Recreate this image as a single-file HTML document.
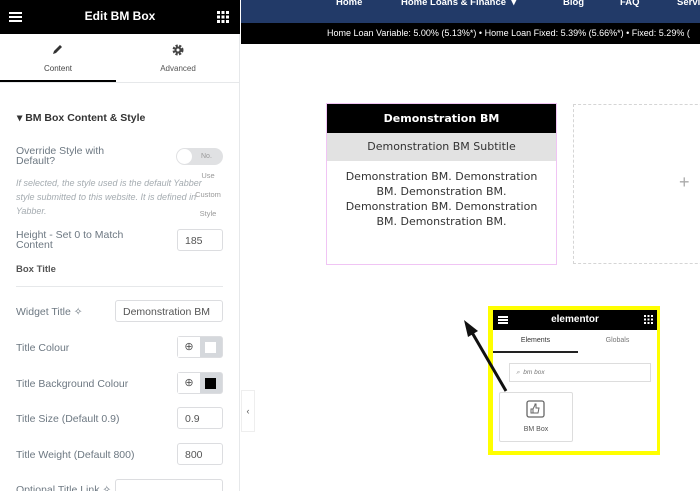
<!DOCTYPE html>
<html><head><style>
*{box-sizing:border-box;margin:0;padding:0}
html,body{width:700px;height:491px;overflow:hidden}
body{background:#fff;font-family:"Liberation Sans",sans-serif;position:relative}
.a{position:absolute}
.lbl{font-size:10.5px;color:#6d7882}
.inp{border:1px solid #dcdde0;border-radius:3px;background:#fff;font-size:10.5px;color:#555;padding:5px 7px}
</style></head><body>
<div class="a" style="left:0;top:0;width:240px;height:491px;background:#fff;border-right:1px solid #e6e8ea"></div>
<div class="a" style="left:0;top:0;width:240px;height:34px;background:#000;color:#fff;font-weight:bold;font-size:12px;text-align:center;line-height:33px">Edit BM Box</div>
<div class="a" style="left:9px;top:12px;width:13px;height:2px;background:#fff;box-shadow:0 4px 0 #fff,0 8px 0 #fff"></div>
<svg class="a" style="left:217px;top:11px" width="12" height="12"><g fill="#fff"><rect x="0" y="0" width="3" height="3"/><rect x="4.5" y="0" width="3" height="3"/><rect x="9" y="0" width="3" height="3"/><rect x="0" y="4.5" width="3" height="3"/><rect x="4.5" y="4.5" width="3" height="3"/><rect x="9" y="4.5" width="3" height="3"/><rect x="0" y="9" width="3" height="3"/><rect x="4.5" y="9" width="3" height="3"/><rect x="9" y="9" width="3" height="3"/></g></svg>
<div class="a" style="left:0;top:82px;width:240px;height:1px;background:#e6e8ea"></div>
<div class="a" style="left:0;top:80px;width:116px;height:2px;background:#000"></div>
<svg class="a" style="left:51px;top:44px" width="12" height="12"><path d="M2 10 L3 7 L9 1 L11 3 L5 9 Z" fill="#333"/></svg>
<div class="a" style="left:0;top:64px;width:116px;text-align:center;font-size:8px;color:#444">Content</div>
<svg class="a" style="left:172px;top:44px" width="12" height="12"><circle cx="6" cy="6" r="4" fill="none" stroke="#444" stroke-width="3" stroke-dasharray="2 1.3"/><circle cx="6" cy="6" r="3.5" fill="#444"/><circle cx="6" cy="6" r="1.5" fill="#fff"/></svg>
<div class="a" style="left:120px;top:64px;width:116px;text-align:center;font-size:8px;color:#555">Advanced</div>
<div class="a" style="left:17px;top:112px;font-size:10.5px;font-weight:bold;color:#333">▾ BM Box Content &amp; Style</div>
<div class="a lbl" style="left:16px;top:146px;line-height:10px">Override Style with<br>Default?</div>
<div class="a" style="left:176px;top:148px;width:47px;height:17px;border-radius:9px;background:#e0e1e3"></div>
<div class="a" style="left:177px;top:149px;width:15px;height:15px;border-radius:50%;background:#fff"></div>
<div class="a" style="left:201px;top:153px;font-size:7px;color:#999">No.</div>
<div class="a" style="left:193px;top:166px;font-size:7.5px;color:#999;text-align:center;line-height:19px;width:30px">Use<br>Custom<br>Style</div>
<div class="a" style="left:16px;top:176px;font-size:9px;font-style:italic;color:#a4abb0;line-height:14px;width:200px">If selected, the style used is the default Yabber style submitted to this website. It is defined in Yabber.</div>
<div class="a lbl" style="left:16px;top:230px;line-height:10px">Height - Set 0 to Match<br>Content</div>
<div class="a inp" style="left:177px;top:229px;width:46px;height:22px">185</div>
<div class="a" style="left:16px;top:264px;font-size:9.5px;font-weight:bold;color:#555">Box Title</div>
<div class="a" style="left:16px;top:286px;width:207px;height:1px;background:#e6e8ea"></div>
<div class="a lbl" style="left:16px;top:306px">Widget Title ✧</div>
<div class="a inp" style="left:115px;top:300px;width:108px;height:22px">Demonstration BM</div>
<div class="a lbl" style="left:16px;top:342px">Title Colour</div>
<div class="a" style="left:177px;top:336px;width:46px;height:22px;border:1px solid #dcdde0;border-radius:3px;background:#d5d8dc"><div style="position:absolute;left:0;top:0;width:22px;height:20px;background:#fff;font-size:11px;text-align:center;line-height:20px;color:#555">⊕</div><div style="position:absolute;left:27px;top:5px;width:11px;height:11px;background:#fff"></div></div>
<div class="a lbl" style="left:16px;top:378px">Title Background Colour</div>
<div class="a" style="left:177px;top:372px;width:46px;height:22px;border:1px solid #dcdde0;border-radius:3px;background:#d5d8dc"><div style="position:absolute;left:0;top:0;width:22px;height:20px;background:#fff;font-size:11px;text-align:center;line-height:20px;color:#555">⊕</div><div style="position:absolute;left:27px;top:5px;width:11px;height:11px;background:#000"></div></div>
<div class="a lbl" style="left:16px;top:413px">Title Size (Default 0.9)</div>
<div class="a inp" style="left:177px;top:407px;width:46px;height:22px">0.9</div>
<div class="a lbl" style="left:16px;top:449px">Title Weight (Default 800)</div>
<div class="a inp" style="left:177px;top:443px;width:46px;height:22px">800</div>
<div class="a lbl" style="left:16px;top:484px">Optional Title Link ✧</div>
<div class="a inp" style="left:115px;top:479px;width:108px;height:22px"></div>
<div class="a" style="left:241px;top:390px;width:14px;height:42px;background:#fff;border:1px solid #eee;font-size:9px;color:#555;text-align:center;line-height:40px">‹</div>
<div class="a" style="left:241px;top:0;width:459px;height:23px;background:#223a68;color:#fff;font-weight:bold;font-size:9.5px"><span class="a" style="left:95px;top:-3px">Home</span><span class="a" style="left:160px;top:-3px">Home Loans &amp; Finance &nbsp;▾</span><span class="a" style="left:322px;top:-3px">Blog</span><span class="a" style="left:379px;top:-3px">FAQ</span><span class="a" style="left:436px;top:-3px">Servi</span></div>
<div class="a" style="left:241px;top:23px;width:459px;height:21px;background:#000;color:#fff;font-size:9px;line-height:20px;white-space:nowrap;overflow:hidden;padding-left:86px">Home Loan Variable: 5.00% (5.13%*) • Home Loan Fixed: 5.39% (5.66%*) • Fixed: 5.29% (</div>
<div class="a" style="left:326px;top:103px;width:231px;height:162px;border:1.5px solid #f0c4f4;background:#fff"></div>
<div class="a" style="left:327px;top:104px;width:229px;height:29px;background:#000;color:#fff;font-weight:bold;font-size:11px;text-align:center;line-height:29px;font-family:'DejaVu Sans',sans-serif">Demonstration BM</div>
<div class="a" style="left:327px;top:133px;width:229px;height:28px;background:#e2e2e2;color:#333;font-size:11px;text-align:center;line-height:28px;font-family:'DejaVu Sans',sans-serif">Demonstration BM Subtitle</div>
<div class="a" style="left:336px;top:169px;width:211px;color:#333;font-size:11px;text-align:center;line-height:15px;font-family:'DejaVu Sans',sans-serif">Demonstration BM. Demonstration BM. Demonstration BM.<br>Demonstration BM. Demonstration BM. Demonstration BM.</div>
<div class="a" style="left:573px;top:104px;width:140px;height:160px;border:1px dashed #d5d5d5"></div>
<div class="a" style="left:679px;top:172px;font-size:18px;color:#aaa">+</div>
<div class="a" style="left:488px;top:306px;width:172px;height:149px;background:#ffff00"></div>
<div class="a" style="left:493px;top:310px;width:164px;height:141px;background:#fff"></div>
<div class="a" style="left:493px;top:310px;width:164px;height:20px;background:#000;color:#fff;font-weight:bold;font-size:10px;text-align:center;line-height:20px">elementor</div>
<div class="a" style="left:498px;top:316px;width:10px;height:2px;background:#fff;box-shadow:0 3px 0 #fff,0 6px 0 #fff"></div>
<svg class="a" style="left:644px;top:315px" width="9" height="9"><g fill="#fff"><rect x="0" y="0" width="2" height="2"/><rect x="3.5" y="0" width="2" height="2"/><rect x="7" y="0" width="2" height="2"/><rect x="0" y="3.5" width="2" height="2"/><rect x="3.5" y="3.5" width="2" height="2"/><rect x="7" y="3.5" width="2" height="2"/><rect x="0" y="7" width="2" height="2"/><rect x="3.5" y="7" width="2" height="2"/><rect x="7" y="7" width="2" height="2"/></g></svg>
<div class="a" style="left:493px;top:337px;width:85px;text-align:center;font-size:7px;color:#333">Elements</div>
<div class="a" style="left:578px;top:337px;width:79px;text-align:center;font-size:7px;color:#777">Globals</div>
<div class="a" style="left:493px;top:351px;width:85px;height:2px;background:#222"></div>
<div class="a" style="left:509px;top:363px;width:142px;height:19px;border:1px solid #ddd;font-size:6.5px;font-style:italic;color:#777;line-height:17px;padding-left:6px">⌕ &nbsp;bm box</div>
<div class="a" style="left:499px;top:392px;width:74px;height:50px;border:1px solid #ddd;border-radius:2px"></div>
<svg class="a" style="left:526px;top:400px" width="19" height="18"><rect x="1" y="1" width="17" height="16" rx="2" fill="none" stroke="#666" stroke-width="1.3"/><path d="M5 13 V9 H7 V13 Z M7 9 L9 5 V4 H10 L10 8 H13 L12 13 H7" fill="none" stroke="#666"/></svg>
<div class="a" style="left:499px;top:426px;width:74px;text-align:center;font-size:7px;color:#555">BM Box</div>
<svg class="a" style="left:460px;top:315px" width="50" height="80"><line x1="46" y1="76" x2="10" y2="14" stroke="#111" stroke-width="3"/><path d="M4 5 L18 16 L8 22 Z" fill="#111"/></svg>
</body></html>
